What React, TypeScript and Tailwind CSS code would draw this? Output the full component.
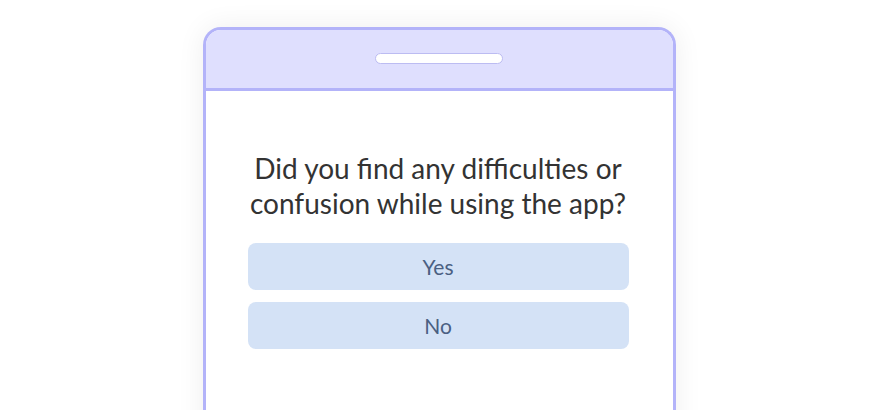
export default function App() {
  return (
    <div className="h-[410px] w-[878px] overflow-hidden bg-white pt-[27px] font-['Lato',sans-serif]">
      <div className="mx-auto h-[420px] w-[473px] overflow-hidden rounded-t-[18px] border-[3px] border-b-0 border-[#b3b3f9] bg-white shadow-[0_0_28px_rgba(0,0,0,0.07)]">
        <div className="flex h-[61px] items-center justify-center border-b-[3px] border-[#b3b3f9] bg-[#dfdffe]">
          <div className="mb-[2px] h-[11px] w-[128px] rounded-full border border-[#bcbcf2] bg-white" />
        </div>

        <div className="flex flex-col items-center pt-[60px] pr-[44px] pl-[42px]">
          <p className="text-center text-[28px] leading-[35px] text-[#333333]">
            Did you find any difficulties or
            <br />
            confusion while using the app?
          </p>

          <div className="mt-[22px] flex w-full flex-col gap-[12px]">
            {['Yes', 'No'].map((label) => (
              <button
                key={label}
                type="button"
                className="h-[47px] w-full rounded-[8px] bg-[#d4e2f6] text-[21px] text-[#4a5f82]"
              >
                {label}
              </button>
            ))}
          </div>
        </div>
      </div>
    </div>
  )
}
